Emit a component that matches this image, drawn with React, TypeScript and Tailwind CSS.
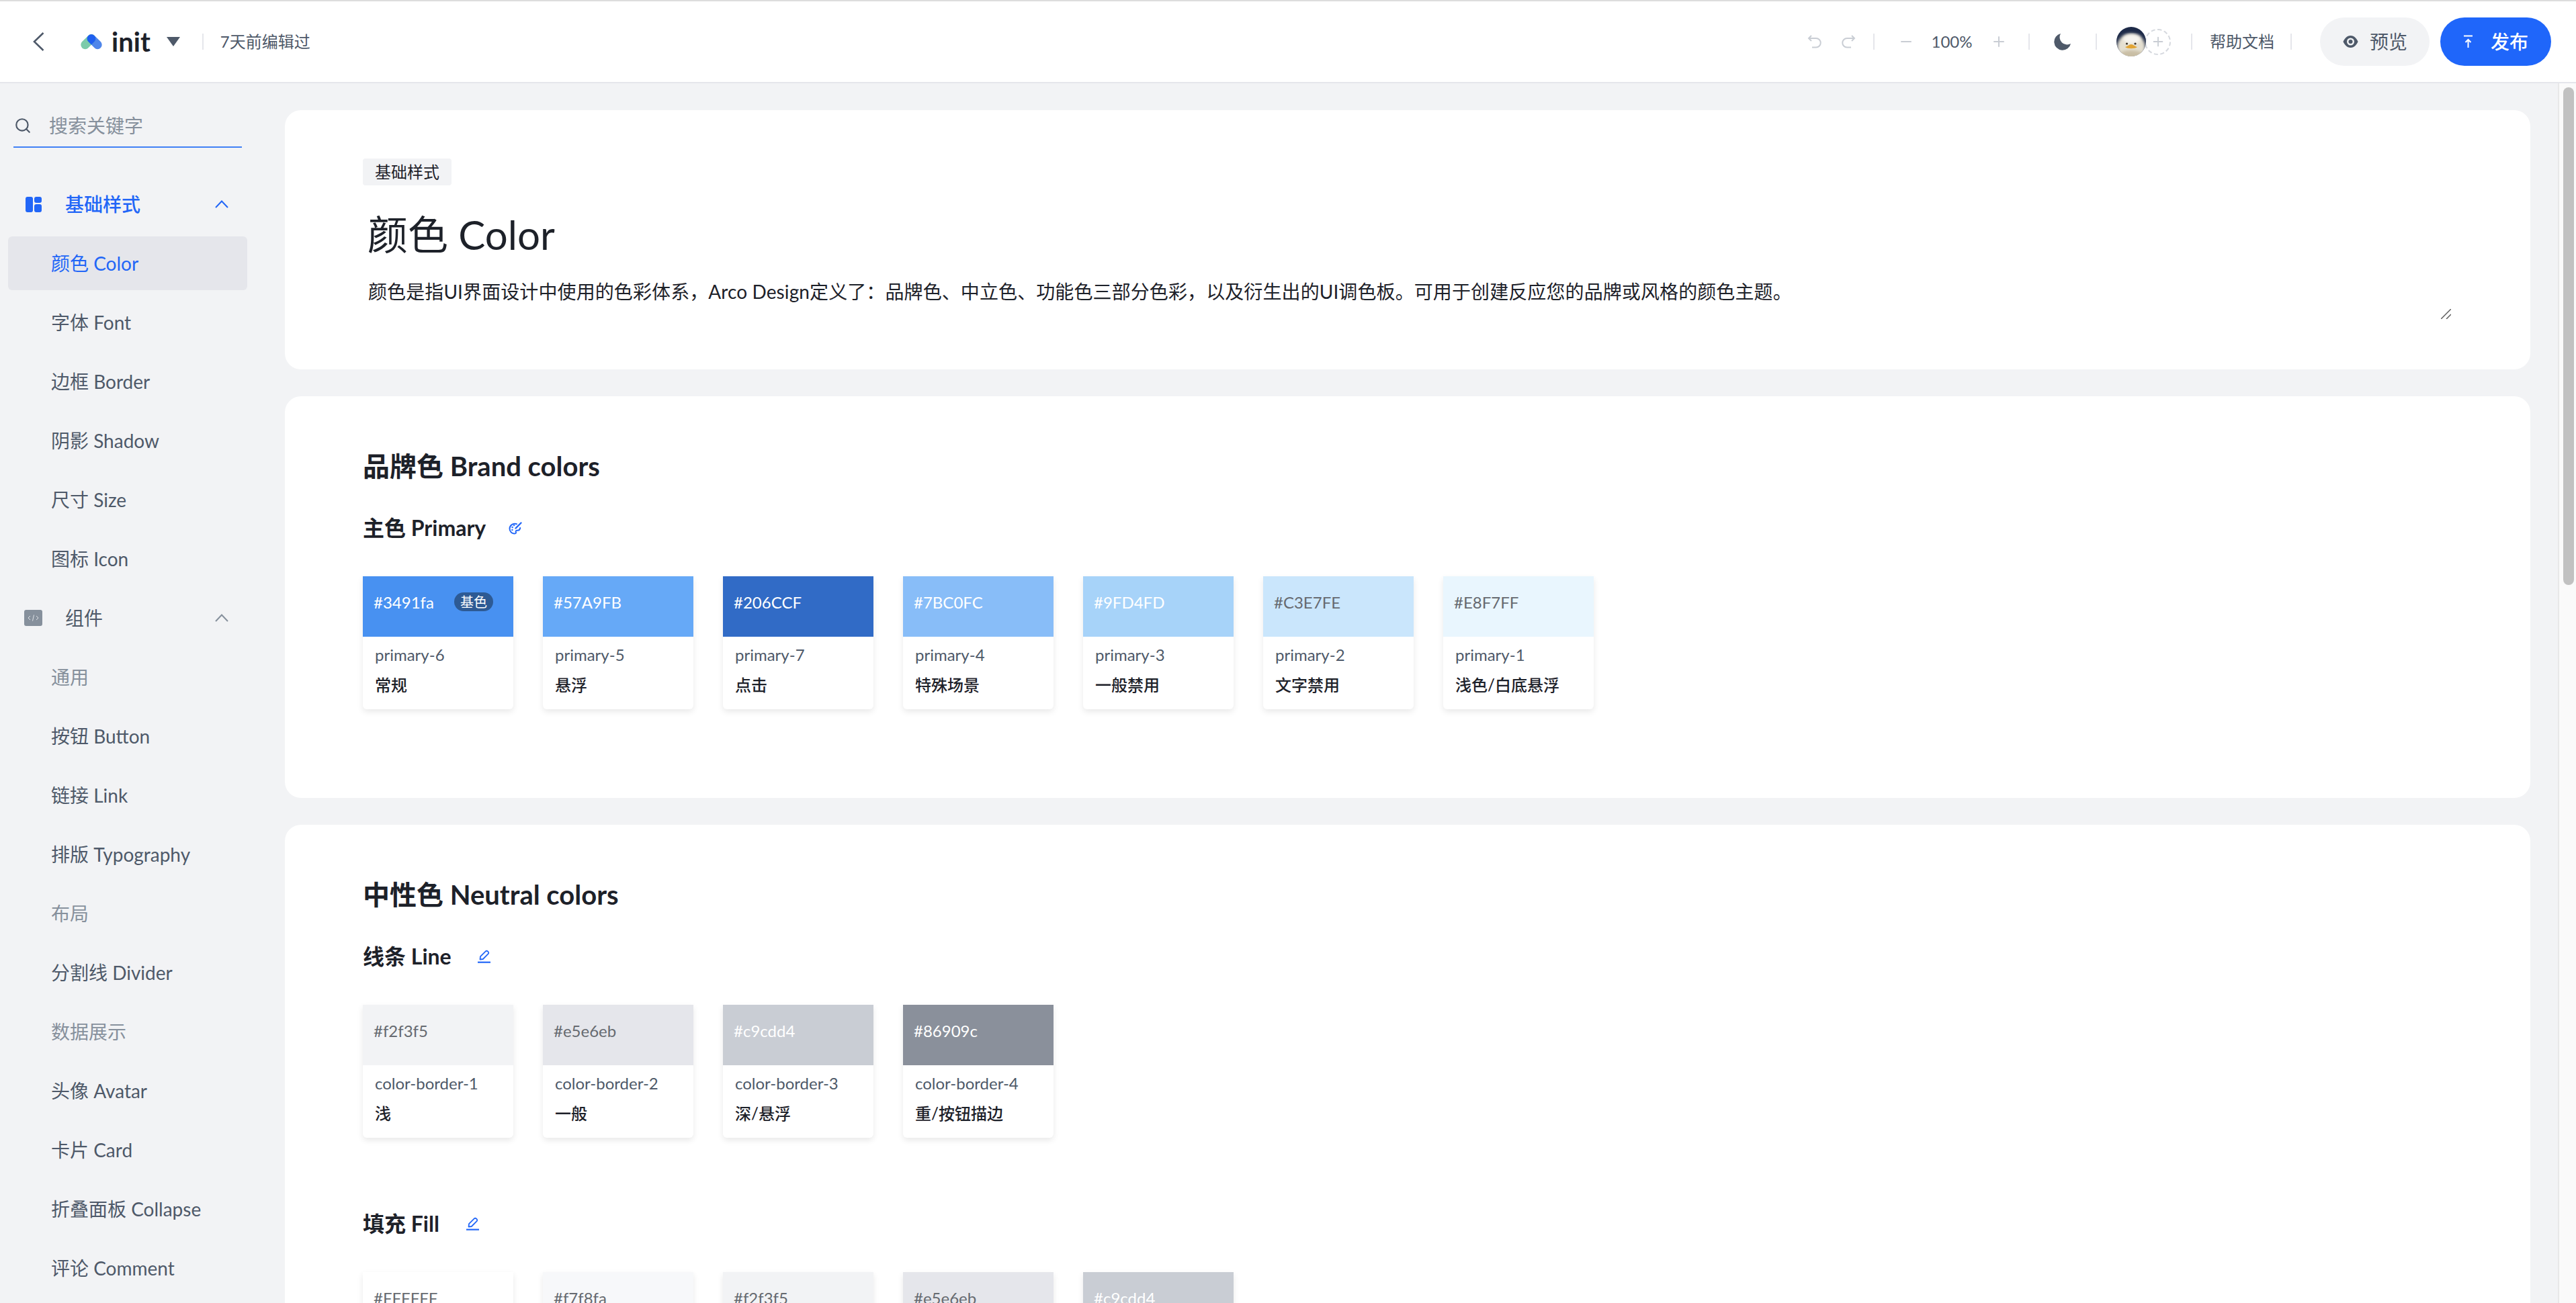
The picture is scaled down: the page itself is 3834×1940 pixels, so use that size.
import { Minus, Plus, Search } from 'lucide-react';

type Swatch = { hex: string; bg: string; light?: boolean; name?: string; desc?: string; base?: boolean };

const primary: Swatch[] = [
  { hex: '#3491fa', bg: 'bg-[#4891f1]', light: true, name: 'primary-6', desc: '常规', base: true },
  { hex: '#57A9FB', bg: 'bg-[#66a9f7]', light: true, name: 'primary-5', desc: '悬浮' },
  { hex: '#206CCF', bg: 'bg-[#316bc6]', light: true, name: 'primary-7', desc: '点击' },
  { hex: '#7BC0FC', bg: 'bg-[#88bdf8]', light: true, name: 'primary-4', desc: '特殊场景' },
  { hex: '#9FD4FD', bg: 'bg-[#a7d3f9]', light: true, name: 'primary-3', desc: '一般禁用' },
  { hex: '#C3E7FE', bg: 'bg-[#cae6fc]', name: 'primary-2', desc: '文字禁用' },
  { hex: '#E8F7FF', bg: 'bg-[#e9f6fe]', name: 'primary-1', desc: '浅色/白底悬浮' },
];

const line: Swatch[] = [
  { hex: '#f2f3f5', bg: 'bg-[#f2f3f5]', name: 'color-border-1', desc: '浅' },
  { hex: '#e5e6eb', bg: 'bg-[#e5e6eb]', name: 'color-border-2', desc: '一般' },
  { hex: '#c9cdd4', bg: 'bg-[#c9cdd4]', light: true, name: 'color-border-3', desc: '深/悬浮' },
  { hex: '#86909c', bg: 'bg-[#8a909b]', light: true, name: 'color-border-4', desc: '重/按钮描边' },
];

// the last row runs off the bottom of the page, only the hex part shows
const fill: Swatch[] = [
  { hex: '#FFFFFF', bg: 'bg-white' },
  { hex: '#f7f8fa', bg: 'bg-[#f7f8fa]' },
  { hex: '#f2f3f5', bg: 'bg-[#f2f3f5]' },
  { hex: '#e5e6eb', bg: 'bg-[#e5e6eb]' },
  { hex: '#c9cdd4', bg: 'bg-[#c9cdd4]', light: true },
];

const menu = [
  { label: '颜色 Color', active: true },
  { label: '字体 Font' },
  { label: '边框 Border' },
  { label: '阴影 Shadow' },
  { label: '尺寸 Size' },
  { label: '图标 Icon' },
];

const menu2 = [
  { label: '通用', muted: true },
  { label: '按钮 Button' },
  { label: '链接 Link' },
  { label: '排版 Typography' },
  { label: '布局', muted: true },
  { label: '分割线 Divider' },
  { label: '数据展示', muted: true },
  { label: '头像 Avatar' },
  { label: '卡片 Card' },
  { label: '折叠面板 Collapse' },
  { label: '评论 Comment' },
];

const Divider = ({ className }: { className: string }) => (
  <div className={`w-[2px] h-[24px] bg-[#e5e6eb] shrink-0 ${className}`} />
);

const Logo = () => (
  <svg width="32" height="23" viewBox="0 0 32 23">
    <defs>
      <clipPath id="logo-clip">
        <rect x="-6.5" y="-6.5" width="13" height="26" rx="6.5" transform="translate(16 6.5) rotate(-45)" />
      </clipPath>
    </defs>
    <rect x="-6.5" y="-6.5" width="13" height="26" rx="6.5" transform="translate(16 6.5) rotate(-45)" fill="#4f86ea" />
    <rect x="-6.5" y="-6.5" width="13" height="26" rx="6.5" transform="translate(16 6.5) rotate(45)" fill="#7ccbaa" />
    <g clipPath="url(#logo-clip)">
      <rect x="-6.5" y="-6.5" width="13" height="26" rx="6.5" transform="translate(16 6.5) rotate(45)" fill="#1f5ff0" />
    </g>
  </svg>
);

const Avatar = () => (
  <svg width="44" height="44" viewBox="0 0 44 44" className="shrink-0 relative">
    <defs>
      <clipPath id="avatar-clip">
        <circle cx="22" cy="22" r="22" />
      </clipPath>
      <filter id="avatar-blur">
        <feGaussianBlur stdDeviation="2" />
      </filter>
      <filter id="avatar-blur-small">
        <feGaussianBlur stdDeviation="0.7" />
      </filter>
    </defs>
    <g clipPath="url(#avatar-clip)">
      <rect width="44" height="44" fill="#1d2a48" />
      <ellipse cx="22" cy="30" rx="21" ry="20" fill="#e4dfd0" filter="url(#avatar-blur)" />
      <ellipse cx="23" cy="18" rx="13" ry="7" fill="#f6f4ef" filter="url(#avatar-blur)" />
      <ellipse cx="22" cy="42" rx="18" ry="7" fill="#c9bea4" filter="url(#avatar-blur)" />
      <circle cx="15.5" cy="25" r="1.6" fill="#3d352c" filter="url(#avatar-blur-small)" />
      <circle cx="28" cy="25" r="1.6" fill="#3d352c" filter="url(#avatar-blur-small)" />
      <path d="M13 30 C17 29 19 26 22 26 C25 26 27 29 31 30 C28 33 16 33 13 30 Z" fill="#e2a534" filter="url(#avatar-blur-small)" />
    </g>
  </svg>
);

const PaletteMark = () => (
  <svg width="20" height="19" viewBox="0 0 20 19" fill="none" stroke="#2468f8" strokeWidth="2" strokeLinecap="round">
    <path d="M12 3.2 C7 1.6 1.5 5 1.5 10 C1.5 14.5 5 17.5 9 17.5 C10.8 17.5 11.3 16.4 10.8 15.2 C10.2 13.8 11.2 12.6 12.6 12.7 C15 12.9 16.8 11.8 17.2 9" />
    <path d="M18.5 1.5 L10.5 9.5" strokeWidth="2.4" />
    <circle cx="5.5" cy="8" r="0.9" fill="#2468f8" strokeWidth="0.6" />
    <circle cx="8" cy="5.2" r="0.9" fill="#2468f8" strokeWidth="0.6" />
    <circle cx="5.3" cy="12" r="0.9" fill="#2468f8" strokeWidth="0.6" />
  </svg>
);

const PencilMark = () => (
  <svg width="21" height="20" viewBox="0 0 21 20" fill="none" className="shrink-0">
    <path d="M4.5 14.5 L5 10.2 L12.8 2.4 A2.1 2.1 0 0 1 15.8 2.4 L16.6 3.2 A2.1 2.1 0 0 1 16.6 6.2 L8.8 14 Z" stroke="#2468f8" strokeWidth="1.8" strokeLinejoin="round" />
    <rect x="1" y="17.6" width="19" height="2.2" fill="#2468f8" />
  </svg>
);

const ArrowUp = ({ className }: { className: string }) => (
  <svg width="20" height="12" viewBox="0 0 20 12" fill="none" stroke="currentColor" strokeWidth="2" className={`shrink-0 ml-auto ${className}`}>
    <path d="M1 11 L10 1.5 L19 11" />
  </svg>
);

const SwatchCard = ({ item }: { item: Swatch }) => (
  <div className="w-[224px] h-[198px] shrink-0 bg-white rounded-b-[6px] shadow-[0_4px_10px_rgba(0,0,0,0.09)] overflow-hidden">
    <div className={`h-[90px] pt-[22px] px-[16px] flex items-start justify-between ${item.bg}`}>
      <span className={`text-[24px] leading-[34px] ${item.light ? 'text-white' : 'text-[#666a70]'}`}>{item.hex}</span>
      {item.base && (
        <span className="h-[28px] w-[58px] mt-[2px] mr-[14px] rounded-full bg-[#2d5a94] text-white text-[20px] leading-[28px] text-center">基色</span>
      )}
    </div>
    {item.name && (
      <div className="px-[18px] pt-[10px]">
        <div className="text-[24px] leading-[34px] text-[#4e5969]">{item.name}</div>
        <div className="text-[24px] leading-[34px] mt-[11px] text-[#1d2129] font-medium">{item.desc}</div>
      </div>
    )}
  </div>
);

const SwatchRow = ({ items }: { items: Swatch[] }) => (
  <div className="flex gap-[44px] mt-[52px]">
    {items.map((item) => (
      <SwatchCard key={item.hex} item={item} />
    ))}
  </div>
);

const SideRow = ({ label, active, muted }: { label: string; active?: boolean; muted?: boolean }) => (
  <div
    className={`h-[80px] mb-[8px] pl-[64px] flex items-center rounded-[6px] text-[28px] ${
      active ? 'bg-[#e5e6eb] text-[#2266f7]' : muted ? 'text-[#86909c]' : 'text-[#4e5969]'
    }`}
  >
    {label}
  </div>
);

export default function App() {
  return (
    <div className="w-[3834px] h-[1940px] overflow-hidden flex flex-col bg-[#f2f3f5] text-[#1d2129] font-['Lato','Noto_Sans_CJK_SC',sans-serif]">
      {/* Top bar */}
      <header className="h-[124px] shrink-0 bg-white border-t-2 border-t-[#dddddd] border-b-2 border-b-[#e5e6eb] flex items-center">
        <svg width="17" height="28" viewBox="0 0 17 28" fill="none" stroke="#4e5969" strokeWidth="2.6" className="ml-[49px] shrink-0">
          <path d="M15.5 1 L2 14 L15.5 27" />
        </svg>
        <div className="ml-[54px] shrink-0 flex">
          <Logo />
        </div>
        <span className="ml-[14px] text-[40px] font-bold leading-none">init</span>
        <svg width="20" height="14" viewBox="0 0 20 14" className="ml-[24px]">
          <path d="M0 0 H20 L10 14 Z" fill="#4e5969" />
        </svg>
        <Divider className="ml-[33px]" />
        <span className="ml-[25px] text-[24px] text-[#4e5969]">7天前编辑过</span>

        <div className="ml-auto flex items-center pr-[37px]">
          <svg width="22" height="20" viewBox="0 0 22 20" fill="none" stroke="#c9cdd4" strokeWidth="2">
            <path d="M6 1 L2 5 L6 9 M2 5 H13 A6.5 6.5 0 0 1 13 18.5 H7" />
          </svg>
          <svg width="22" height="20" viewBox="0 0 22 20" fill="none" stroke="#c9cdd4" strokeWidth="2" className="ml-[28px]">
            <path d="M16 1 L20 5 L16 9 M20 5 H9 A6.5 6.5 0 0 0 9 18.5 H15" />
          </svg>
          <Divider className="ml-[26px]" />
          <Minus className="ml-[35px] w-[24px] h-[24px] text-[#c9cdd4]" strokeWidth={2} />
          <span className="ml-[24px] w-[64px] text-center text-[24px] text-[#4e5969]">100%</span>
          <Plus className="ml-[26px] w-[24px] h-[24px] text-[#c9cdd4]" strokeWidth={2} />
          <Divider className="ml-[32px]" />
          <svg width="25" height="25" viewBox="0 0 25 25" className="ml-[36px]">
            <path d="M10 0 A12.5 12.5 0 1 0 25 15 A11 11 0 0 1 10 0 Z" fill="#4e5969" />
          </svg>
          <Divider className="ml-[37px]" />
          <div className="ml-[29px] flex items-center">
            <Avatar />
            <div className="-ml-[2px] w-[39px] h-[39px] rounded-full border-2 border-dashed border-[#d5d8de] flex items-center justify-center">
              <Plus className="w-[22px] h-[22px] text-[#c9cdd4]" strokeWidth={2} />
            </div>
          </div>
          <Divider className="ml-[30px]" />
          <span className="ml-[26px] text-[24px] text-[#4e5969]">帮助文档</span>
          <Divider className="ml-[24px]" />
          <button className="ml-[42px] w-[163px] h-[72px] rounded-full bg-[#f2f3f5] flex items-center pl-[34px] text-[28px] text-[#4e5969]">
            <svg width="23" height="20" viewBox="0 0 23 20">
              <path d="M11.5 1 C17 1 21 6 22.5 10 C21 14 17 19 11.5 19 C6 19 2 14 0.5 10 C2 6 6 1 11.5 1 Z" fill="#4e5969" />
              <circle cx="11.5" cy="10" r="5.5" fill="#f2f3f5" />
              <circle cx="11.5" cy="10" r="3" fill="#4e5969" />
            </svg>
            <span className="ml-[17px]">预览</span>
          </button>
          <button className="ml-[16px] w-[165px] h-[72px] rounded-full bg-[#1f66fa] flex items-center pl-[35px] text-[28px] font-medium text-white">
            <svg width="13" height="20" viewBox="0 0 13 20" fill="none" stroke="white" strokeWidth="2">
              <path d="M0 1.5 H13 M6.5 19 V7 M2.5 11 L6.5 7 L10.5 11" />
            </svg>
            <span className="ml-[27px]">发布</span>
          </button>
        </div>
      </header>

      <div className="flex-1 flex min-h-0">
        {/* Sidebar */}
        <aside className="w-[424px] shrink-0 overflow-hidden pl-[12px] pr-[56px]">
          <div className="mt-[32px] ml-[8px] w-[340px] h-[64px] border-b-2 border-b-[#4080f5] flex items-center">
            <Search className="ml-[1px] w-[26px] h-[26px] text-[#4e5969]" strokeWidth={2} />
            <span className="ml-[26px] text-[28px] text-[#86909c]">搜索关键字</span>
          </div>

          <div className="mt-[44px] h-[80px] mb-[8px] pl-[26px] pr-[28px] flex items-center text-[#2266f7]">
            <svg width="24" height="23" viewBox="0 0 24 23" fill="#2266f7" className="shrink-0">
              <rect x="0" y="0" width="11" height="23" rx="3" />
              <rect x="13" y="0" width="11" height="9" rx="3" />
              <rect x="13" y="11" width="11" height="12" rx="3" />
            </svg>
            <span className="ml-[35px] text-[28px] font-medium">基础样式</span>
            <ArrowUp className="text-[#2266f7]" />
          </div>
          {menu.map((item) => (
            <SideRow key={item.label} label={item.label} active={item.active} />
          ))}

          <div className="h-[80px] mb-[8px] pl-[24px] pr-[28px] flex items-center text-[#4e5969]">
            <svg width="27" height="24" viewBox="0 0 27 24" fill="none" className="shrink-0">
              <rect width="27" height="24" rx="3" fill="#86909c" />
              <path d="M9 9 L6 12 L9 15 M18 9 L21 12 L18 15 M14.5 7.5 L12.5 16.5" stroke="#dfe2e7" strokeWidth="1" />
            </svg>
            <span className="ml-[34px] text-[28px]">组件</span>
            <ArrowUp className="text-[#86909c]" />
          </div>
          {menu2.map((item) => (
            <SideRow key={item.label} label={item.label} muted={item.muted} />
          ))}
        </aside>

        {/* Main */}
        <main className="flex-1 min-w-0 overflow-hidden pt-[40px] pr-[41px]">
          <section className="relative h-[386px] bg-white rounded-[24px] pl-[116px] pt-[72px] mb-[40px]">
            <span className="block w-[132px] h-[40px] rounded-[4px] bg-[#f2f3f5] text-[24px] leading-[40px] text-center">基础样式</span>
            <h1 className="mt-[42px] pl-[7px] text-[60px] leading-[62px]">颜色 Color</h1>
            <p className="mt-[34px] pl-[8px] text-[28px] leading-[40px] tracking-[0.1px]">
              颜色是指UI界面设计中使用的色彩体系，Arco Design定义了：品牌色、中立色、功能色三部分色彩，以及衍生出的UI调色板。可用于创建反应您的品牌或风格的颜色主题。
            </p>
            <svg width="15" height="15" viewBox="0 0 15 15" stroke="#5f5f5f" strokeWidth="1.5" className="absolute right-[118px] bottom-[75px]">
              <path d="M0 15 L15 0 M8 15 L15 8" />
            </svg>
          </section>

          <section className="bg-white rounded-[24px] pl-[116px] pt-[84px] pb-[132px] mb-[40px]">
            <h2 className="text-[40px] leading-[40px] font-bold">品牌色 Brand colors</h2>
            <div className="mt-[52px] flex items-center">
              <h3 className="text-[32px] leading-[40px] font-bold">主色 Primary</h3>
              <span className="ml-[34px] flex">
                <PaletteMark />
              </span>
            </div>
            <SwatchRow items={primary} />
          </section>

          <section className="bg-white rounded-t-[24px] pl-[116px] pt-[84px] pb-[132px]">
            <h2 className="text-[40px] leading-[40px] font-bold">中性色 Neutral colors</h2>
            <div className="mt-[52px] flex items-center">
              <h3 className="text-[32px] leading-[40px] font-bold">线条 Line</h3>
              <span className="ml-[38px] flex">
                <PencilMark />
              </span>
            </div>
            <SwatchRow items={line} />
            <div className="mt-[108px] flex items-center">
              <h3 className="text-[32px] leading-[40px] font-bold">填充 Fill</h3>
              <span className="ml-[39px] flex">
                <PencilMark />
              </span>
            </div>
            <SwatchRow items={fill} />
          </section>
        </main>

        {/* Scrollbar */}
        <div className="w-[27px] shrink-0 bg-[#fafafa] border-l-2 border-l-[#e8e8e8] pt-[6px] pl-[6px]">
          <div className="w-[16px] h-[741px] rounded-full bg-[#c1c1c1]" />
        </div>
      </div>
    </div>
  );
}
